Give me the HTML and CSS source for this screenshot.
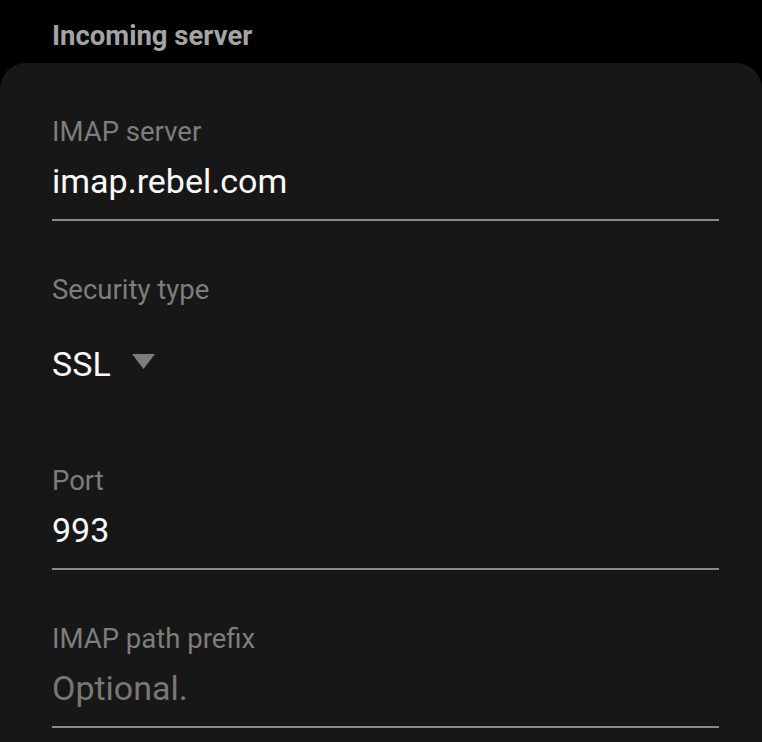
FILE: index.html
```html
<!DOCTYPE html>
<html>
<head>
<meta charset="utf-8">
<link rel="stylesheet" href="styles.css">
</head>
<body>
<div class="section-title">Incoming server</div>
<div class="card">
  <div class="field">
    <div class="label">IMAP server</div>
    <div class="value underlined">imap.rebel.com</div>
  </div>
  <div class="field select-field">
    <div class="label">Security type</div>
    <div class="value select">
      <span>SSL</span>
      <svg class="caret" width="23" height="15" viewBox="0 0 23 15"><polygon points="0,0 23,0 11.5,15" fill="#7c7c7c"/></svg>
    </div>
  </div>
  <div class="field">
    <div class="label">Port</div>
    <div class="value underlined">993</div>
  </div>
  <div class="field">
    <div class="label">IMAP path prefix</div>
    <div class="value underlined placeholder">Optional.</div>
  </div>
</div>
</body>
</html>
```
FILE: styles.css
```css
html, body {
  margin: 0;
  padding: 0;
  background: #000;
}
body {
  font-family: Roboto, "Noto Sans", sans-serif;
  height: 742px;
  overflow: hidden;
}
.section-title {
  padding: 20px 52px 0;
  font-size: 27.5px;
  line-height: 32px;
  font-weight: 700;
  color: #a4a4a4;
}
.card {
  margin-top: 11px;
  background: #171717;
  border-radius: 26px 26px 0 0;
  padding: 53px 43px 40px 52px;
  display: flex;
  flex-direction: column;
  gap: 53px;
}
.label {
  font-size: 27.5px;
  line-height: 32px;
  color: #7d7d7d;
}
.value {
  margin-top: 13px;
  font-size: 34px;
  line-height: 40px;
  color: #fafafa;
}
.underlined {
  padding-bottom: 18px;
  border-bottom: 2px solid #8a8a8a;
}
.placeholder {
  color: #777;
}
.select-field .select {
  margin-top: 38px;
  margin-bottom: 28px;
  display: flex;
  align-items: center;
}
.caret {
  margin-left: 21px;
  margin-top: -6px;
}
```
